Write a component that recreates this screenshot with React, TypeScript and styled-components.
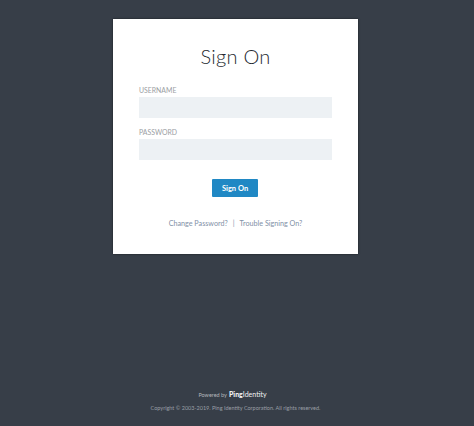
import React from 'react';
import styled, { createGlobalStyle } from 'styled-components';

const GlobalStyle = createGlobalStyle`
  html, body {
    margin: 0;
    padding: 0;
    background: #373e48;
  }
`;

const Page = styled.div`
  width: 474px;
  height: 426px;
  box-sizing: border-box;
  padding-top: 19px;
  background: #373e48;
  font-family: "Lato", "Liberation Sans", sans-serif;
  display: flex;
  flex-direction: column;
  align-items: center;
  overflow: hidden;
`;

const Card = styled.div`
  width: 245px;
  height: 235px;
  margin-right: 3px;
  box-sizing: border-box;
  padding: 24px 26px 0;
  background: #fff;
  box-shadow: 0 0 2px rgba(0, 0, 0, 0.6);
  display: flex;
  flex-direction: column;
`;

const Title = styled.h1`
  margin: 0 0 16px;
  font-size: 20px;
  font-weight: 300;
  line-height: 27px;
  letter-spacing: 0.25px;
  text-align: center;
  color: #262a30;
`;

const Label = styled.label`
  display: block;
  height: 11px;
  font-size: 6.9px;
  line-height: 9px;
  color: #9a9ea3;
`;

const Input = styled.input`
  display: block;
  width: 193px;
  height: 21px;
  margin: 0 0 10px;
  padding: 0;
  box-sizing: border-box;
  border: 0;
  background: #edf1f4;
`;

const Button = styled.button`
  align-self: center;
  width: 46px;
  height: 18px;
  margin: 9px 1px 0 0;
  padding: 0;
  border: 0;
  border-radius: 1px;
  background: #2088c4;
  color: #fff;
  font-family: inherit;
  font-size: 7.5px;
  font-weight: 700;
`;

const Links = styled.div`
  display: flex;
  justify-content: center;
  gap: 5px;
  margin-top: 21px;
  font-size: 7.2px;
  line-height: 11px;
  color: #7f90a6;
`;

const Footer = styled.footer`
  margin-top: 134px;
  margin-right: 3px;
  display: flex;
  flex-direction: column;
  align-items: center;
  color: #9a9fa6;
  font-size: 5.5px;
`;

const Powered = styled.div`
  display: flex;
  align-items: baseline;
  gap: 2px;
  height: 12px;
  margin-right: 6px;
  line-height: 12px;
  color: #b3b7bc;
`;

const Brand = styled.span`
  font-size: 7px;
  color: #f2f3f4;
  font-weight: 900;
`;

const BrandLight = styled.span`
  font-weight: 400;
`;

const Copyright = styled.div`
  margin-top: 3px;
  line-height: 10px;
`;

export default function App() {
  return (
    <Page>
      <GlobalStyle />
      <Card>
        <Title>Sign On</Title>
        <Label htmlFor="username">USERNAME</Label>
        <Input id="username" type="text" />
        <Label htmlFor="password">PASSWORD</Label>
        <Input id="password" type="password" />
        <Button type="button">Sign On</Button>
        <Links>
          <span>Change Password?</span>
          <span>|</span>
          <span>Trouble Signing On?</span>
        </Links>
      </Card>
      <Footer>
        <Powered>
          Powered by
          <Brand>
            Ping<BrandLight>Identity</BrandLight>
          </Brand>
        </Powered>
        <Copyright>Copyright © 2003-2019. Ping Identity Corporation. All rights reserved.</Copyright>
      </Footer>
    </Page>
  );
}
